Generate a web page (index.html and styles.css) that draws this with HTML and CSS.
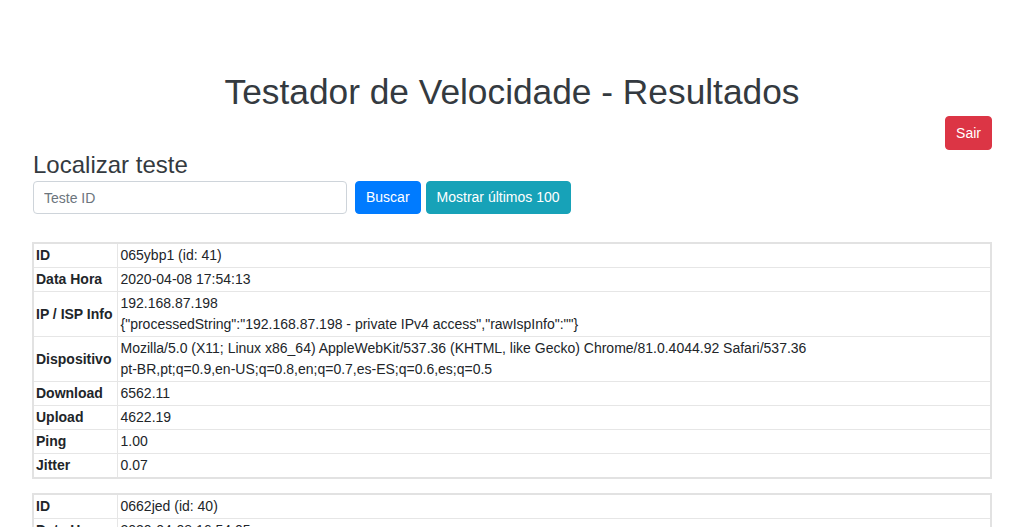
FILE: index.html
```html
<!DOCTYPE html>
<html lang="pt-BR">
<head>
<meta charset="utf-8">
<title>Testador de Velocidade - Resultados</title>
<link rel="stylesheet" href="styles.css">
</head>
<body>
<div class="container">
  <h1 class="page-title">Testador de Velocidade - Resultados</h1>
  <div class="logout-row">
    <button class="btn btn-danger" type="button">Sair</button>
  </div>
  <h4 class="section-title">Localizar teste</h4>
  <form class="search-row">
    <input class="form-control" type="text" placeholder="Teste ID">
    <button class="btn btn-primary btn-search" type="button">Buscar</button>
    <button class="btn btn-info btn-last" type="button">Mostrar últimos 100</button>
  </form>

  <table class="result">
    <tr><th>ID</th><td>065ybp1 (id: 41)</td></tr>
    <tr><th>Data Hora</th><td>2020-04-08 17:54:13</td></tr>
    <tr><th>IP / ISP Info</th><td>192.168.87.198<br>{"processedString":"192.168.87.198 - private IPv4 access","rawIspInfo":""}</td></tr>
    <tr><th>Dispositivo</th><td>Mozilla/5.0 (X11; Linux x86_64) AppleWebKit/537.36 (KHTML, like Gecko) Chrome/81.0.4044.92 Safari/537.36<br>pt-BR,pt;q=0.9,en-US;q=0.8,en;q=0.7,es-ES;q=0.6,es;q=0.5</td></tr>
    <tr><th>Download</th><td>6562.11</td></tr>
    <tr><th>Upload</th><td>4622.19</td></tr>
    <tr><th>Ping</th><td>1.00</td></tr>
    <tr><th>Jitter</th><td>0.07</td></tr>
  </table>

  <table class="result">
    <tr><th>ID</th><td>0662jed (id: 40)</td></tr>
    <tr><th>Data Hora</th><td>2020-04-08 16:54:05</td></tr>
    <tr><th>IP / ISP Info</th><td>192.168.87.198<br>{"processedString":"192.168.87.198 - private IPv4 access","rawIspInfo":""}</td></tr>
    <tr><th>Dispositivo</th><td>Mozilla/5.0 (X11; Linux x86_64) AppleWebKit/537.36 (KHTML, like Gecko) Chrome/81.0.4044.92 Safari/537.36<br>pt-BR,pt;q=0.9,en-US;q=0.8,en;q=0.7,es-ES;q=0.6,es;q=0.5</td></tr>
    <tr><th>Download</th><td>6481.52</td></tr>
    <tr><th>Upload</th><td>4590.33</td></tr>
    <tr><th>Ping</th><td>1.00</td></tr>
    <tr><th>Jitter</th><td>0.05</td></tr>
  </table>
</div>
</body>
</html>
```

FILE: styles.css
```css
* { box-sizing: border-box; }

body {
  margin: 0;
  font-family: "Liberation Sans", Arial, Helvetica, sans-serif;
  font-size: 14px;
  line-height: 1.5;
  color: #212529;
  background: #fff;
}

.container {
  width: 990px;
  margin: 0 auto;
  padding: 71px 15px 40px;
}

.page-title {
  margin: 0;
  font-size: 35.3px;
  font-weight: 400;
  line-height: 42px;
  text-align: center;
  color: #343a40;
}

.logout-row {
  display: flex;
  justify-content: flex-end;
  margin-top: 3px;
}

.section-title {
  margin: 0 0 2px 1px;
  font-size: 24px;
  font-weight: 400;
  line-height: 29px;
  color: #343a40;
}

.search-row {
  display: flex;
  align-items: stretch;
  margin: 0;
}

.form-control {
  width: 314px;
  height: 33px;
  margin: 0 8px 0 1px;
  padding: 5px 10px;
  font: inherit;
  font-size: 14px;
  color: #495057;
  border: 1px solid #ced4da;
  border-radius: 4px;
  background: #fff;
}

.form-control::placeholder { color: #6c757d; }

.btn {
  display: inline-block;
  height: 33px;
  padding: 5px 10px;
  font: inherit;
  font-size: 14px;
  line-height: 21px;
  color: #fff;
  border: 1px solid transparent;
  border-radius: 4px;
  cursor: pointer;
}

.btn-danger { background: #dc3545; border-color: #dc3545; height: 34px; }
.btn-primary { background: #007bff; border-color: #007bff; }
.btn-info { background: #17a2b8; border-color: #17a2b8; }

.btn-search { margin-right: 5px; }

.result {
  width: 100%;
  margin-top: 28px;
  border-collapse: collapse;
  border: 2px solid #e2e2e2;
}

.result + .result { margin-top: 14px; }

.result th,
.result td {
  padding: 1px 2px 1px 3px;
  border: 1px solid #e6e6e6;
  vertical-align: middle;
  text-align: left;
  line-height: 21px;
}

.result th {
  width: 1%;
  padding: 1px 4px 1px 2px;
  white-space: nowrap;
  font-weight: 700;
}
```
